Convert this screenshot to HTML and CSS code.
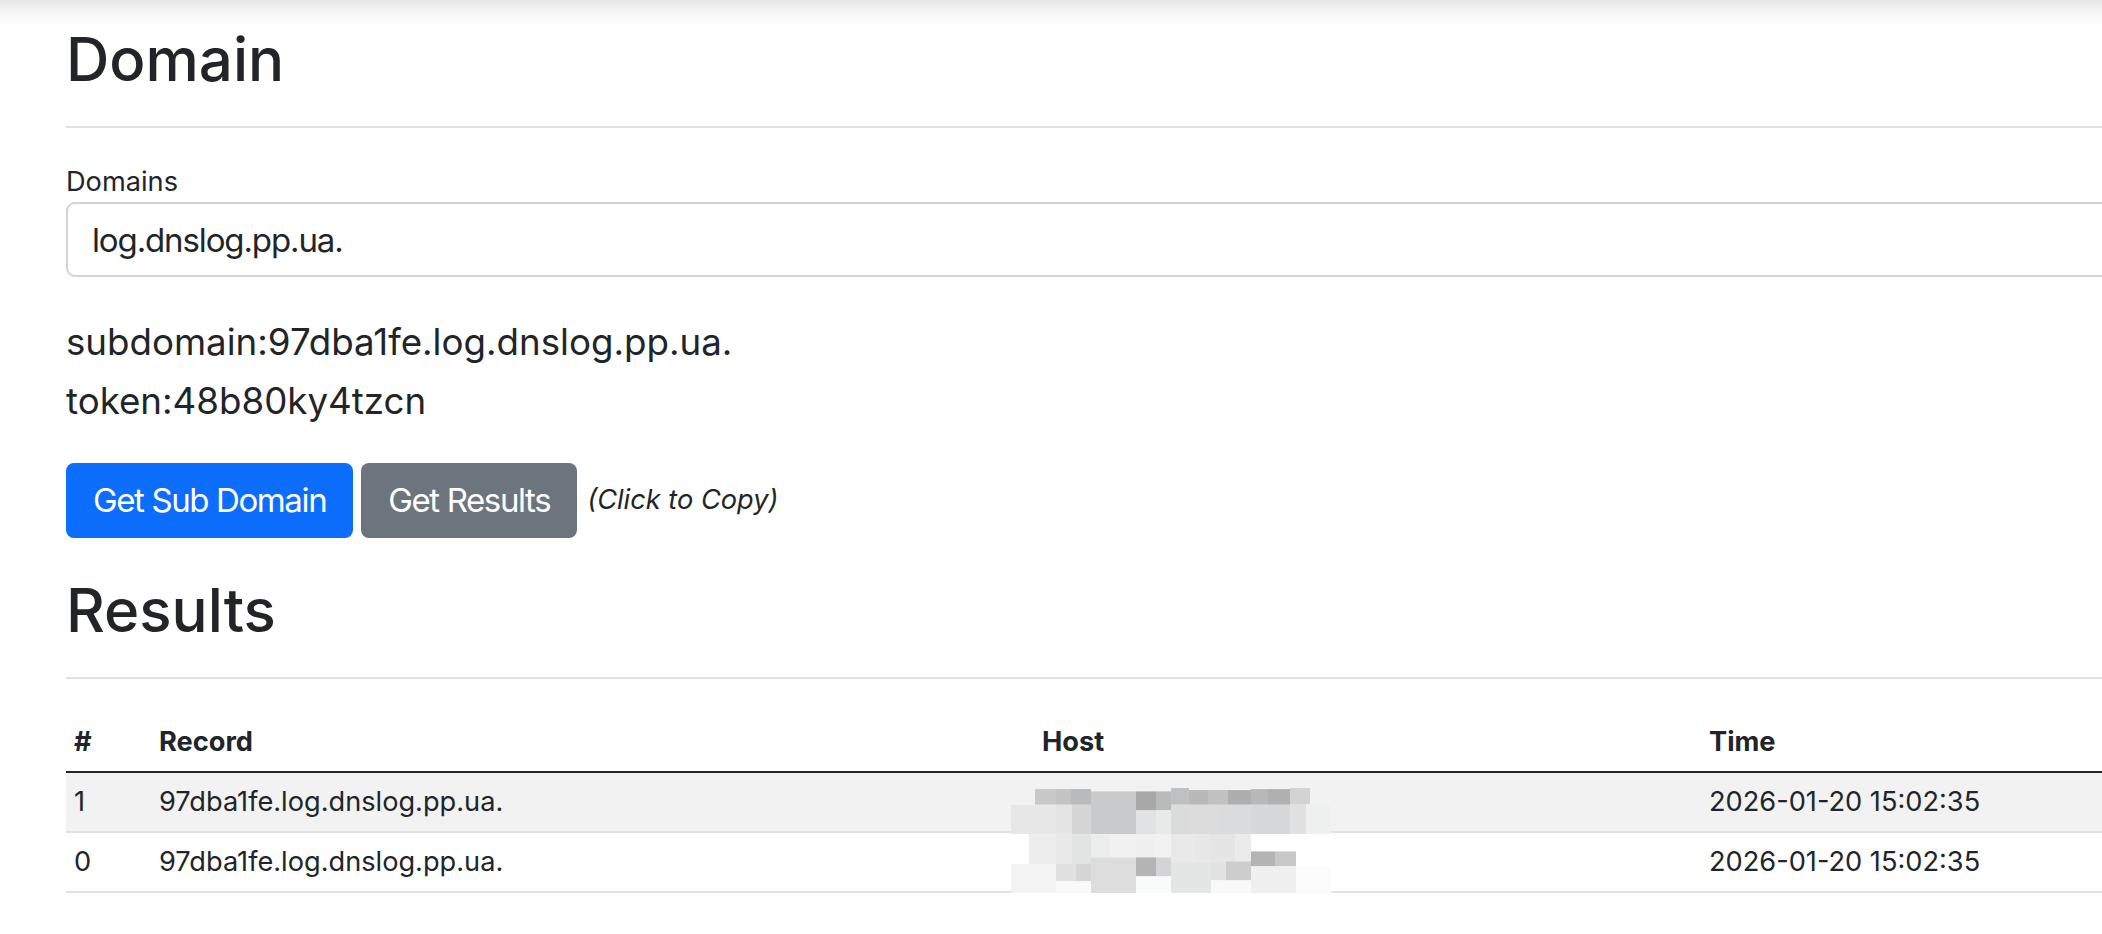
FILE: index.html
```html
<!DOCTYPE html>
<html lang="en">
<head>
<meta charset="utf-8">
<title>DNSLog</title>
<link rel="stylesheet" href="styles.css">
</head>
<body>
<main class="page">
  <h1 class="title">Domain</h1>
  <hr class="rule">
  <label class="field-label" for="domains">Domains</label>
  <input class="field" id="domains" type="text" value="log.dnslog.pp.ua.">
  <div class="info">
    <p class="info-line">subdomain:97dba1fe.log.dnslog.pp.ua.</p>
    <p class="info-line">token:48b80ky4tzcn</p>
  </div>
  <div class="actions">
    <button class="btn btn-primary" type="button">Get Sub Domain</button>
    <button class="btn btn-secondary" type="button">Get Results</button>
    <span class="copy-hint">(Click to Copy)</span>
  </div>
  <h2 class="section-title">Results</h2>
  <hr class="rule rule-results">
  <table class="results">
    <thead>
      <tr>
        <th class="col-idx">#</th>
        <th class="col-record">Record</th>
        <th class="col-host">Host</th>
        <th class="col-time">Time</th>
      </tr>
    </thead>
    <tbody>
      <tr class="striped">
        <td>1</td>
        <td>97dba1fe.log.dnslog.pp.ua.</td>
        <td class="host-cell">
          <svg class="mosaic" width="1" height="1" overflow="visible" aria-hidden="true">
            <g transform="translate(-42 -100.6) scale(0.33333)">
              <rect x="105" y="323" width="63" height="47" fill="#c8c8c8"/>
              <rect x="168" y="323" width="45" height="47" fill="#c3c3c4"/>
              <rect x="213" y="323" width="60" height="47" fill="#b9babb"/>
              <rect x="273" y="330" width="135" height="128" fill="#c9cacb"/>
              <rect x="408" y="330" width="60" height="57" fill="#a8a8a9"/>
              <rect x="468" y="330" width="45" height="57" fill="#b9babb"/>
              <rect x="513" y="320" width="54" height="50" fill="#bfc0c1"/>
              <rect x="567" y="326" width="57" height="44" fill="#b8b8b9"/>
              <rect x="624" y="326" width="60" height="44" fill="#c1c1c2"/>
              <rect x="684" y="326" width="69" height="44" fill="#aeaeaf"/>
              <rect x="753" y="323" width="51" height="47" fill="#b8b8b9"/>
              <rect x="804" y="323" width="66" height="47" fill="#b0b0b1"/>
              <rect x="870" y="320" width="60" height="48" fill="#d3d3d3"/>
              <rect x="33" y="370" width="135" height="88" fill="#e6e7e6"/>
              <rect x="168" y="370" width="48" height="88" fill="#e3e4e3"/>
              <rect x="216" y="370" width="57" height="88" fill="#d6d6d7"/>
              <rect x="408" y="387" width="60" height="71" fill="#e1e2e3"/>
              <rect x="468" y="387" width="45" height="71" fill="#e8eae9"/>
              <rect x="513" y="370" width="54" height="88" fill="#dadbdb"/>
              <rect x="567" y="370" width="90" height="88" fill="#dcdcdd"/>
              <rect x="657" y="370" width="96" height="88" fill="#d9dbdc"/>
              <rect x="753" y="370" width="117" height="88" fill="#d6d7d9"/>
              <rect x="870" y="368" width="48" height="90" fill="#e1e1e2"/>
              <rect x="918" y="370" width="75" height="88" fill="#eff0f0"/>
              <rect x="87" y="458" width="81" height="90" fill="#ecedec"/>
              <rect x="168" y="458" width="48" height="90" fill="#e9e9e9"/>
              <rect x="216" y="458" width="57" height="90" fill="#e2e3e3"/>
              <rect x="273" y="458" width="57" height="70" fill="#eceded"/>
              <rect x="330" y="458" width="78" height="70" fill="#f1f1f1"/>
              <rect x="408" y="458" width="57" height="70" fill="#f0f0f0"/>
              <rect x="465" y="458" width="48" height="70" fill="#f2f2f2"/>
              <rect x="513" y="458" width="72" height="82" fill="#e9e9e9"/>
              <rect x="585" y="458" width="45" height="82" fill="#e7e7e7"/>
              <rect x="630" y="458" width="75" height="82" fill="#e5e5e5"/>
              <rect x="705" y="458" width="48" height="82" fill="#ebebeb"/>
              <rect x="753" y="510" width="72" height="45" fill="#b4b4b5"/>
              <rect x="825" y="510" width="63" height="45" fill="#c8c8c9"/>
              <rect x="33" y="548" width="135" height="97" fill="#f2f3f2"/>
              <rect x="168" y="548" width="60" height="52" fill="#e0e1e0"/>
              <rect x="228" y="548" width="45" height="52" fill="#d6d6d6"/>
              <rect x="168" y="600" width="105" height="45" fill="#f8f9f8"/>
              <rect x="273" y="528" width="135" height="117" fill="#dcdddc"/>
              <rect x="408" y="528" width="60" height="57" fill="#b4b4b5"/>
              <rect x="468" y="528" width="45" height="57" fill="#d4d4d6"/>
              <rect x="408" y="585" width="105" height="60" fill="#f9fafa"/>
              <rect x="513" y="540" width="120" height="105" fill="#e4e5e5"/>
              <rect x="633" y="540" width="45" height="57" fill="#e2e2e2"/>
              <rect x="678" y="540" width="75" height="57" fill="#cdcdcd"/>
              <rect x="633" y="597" width="120" height="48" fill="#f8f9f8"/>
              <rect x="753" y="555" width="135" height="90" fill="#eff0ef"/>
              <rect x="888" y="555" width="105" height="90" fill="#fbfcfb"/>
            </g>
          </svg>
        </td>
        <td>2026-01-20 15:02:35</td>
      </tr>
      <tr>
        <td>0</td>
        <td>97dba1fe.log.dnslog.pp.ua.</td>
        <td class="host-cell"></td>
        <td>2026-01-20 15:02:35</td>
      </tr>
    </tbody>
  </table>
</main>
</body>
</html>
```
FILE: styles.css
```css
html, body {
  margin: 0;
  padding: 0;
}

body {
  overflow: hidden;
  background: #fff linear-gradient(to bottom, #e6e6e6 0px, #f4f4f4 10px, #fdfdfd 22px, #ffffff 28px) no-repeat;
  background-size: 100% 30px;
  color: #212529;
  font-family: Inter, "Liberation Sans", Arial, sans-serif;
  font-size: 27.2px;
  line-height: 1.5;
}

.page {
  width: 2100px;
  margin-left: 66px;
  padding-top: 23px;
}

.title {
  margin: 0;
  font-size: 60px;
  font-weight: 500;
  line-height: 72px;
}

.rule {
  margin: 31px 0 0;
  height: 0;
  border: 0;
  border-top: 2px solid #dee2e6;
}

.field-label {
  display: block;
  margin-top: 33.5px;
  font-size: 27.2px;
  line-height: 40.8px;
}

.field {
  display: block;
  box-sizing: border-box;
  width: 100%;
  height: 75px;
  margin: 0;
  padding: 0 24px;
  border: 2px solid #ced4da;
  border-radius: 9px;
  background: #fff;
  color: #212529;
  font-family: Inter, "Liberation Sans", Arial, sans-serif;
  font-size: 33px;
  letter-spacing: -0.034em;
  outline: none;
}

.info {
  margin-top: 34.3px;
}

.info-line {
  margin: 0;
  font-size: 36.7px;
  font-weight: 400;
  line-height: 59px;
}

.actions {
  display: flex;
  align-items: center;
  gap: 8px;
  margin-top: 33px;
}

.btn {
  height: 75px;
  padding: 0 27px;
  border: 0;
  border-radius: 8px;
  color: #fff;
  font-family: Inter, "Liberation Sans", Arial, sans-serif;
  font-size: 33px;
  font-weight: 400;
  letter-spacing: -0.042em;
  line-height: 1;
  cursor: pointer;
}

.btn-primary {
  background: #0d6efd;
}

.btn-secondary {
  background: #6c757d;
}

.copy-hint {
  margin-left: 2px;
  font-size: 27.2px;
  font-style: italic;
}

.section-title {
  margin: 36px 0 0;
  font-size: 60px;
  font-weight: 500;
  line-height: 72px;
}

.rule-results {
  margin-top: 31.5px;
}

.results {
  width: 2100px;
  margin-top: 34px;
  border-collapse: collapse;
  table-layout: fixed;
}

.results th,
.results td {
  padding: 8.6px 8px;
  text-align: left;
  vertical-align: top;
  line-height: 40.8px;
  font-size: 27.2px;
}

.results th {
  font-weight: 700;
}

.results thead tr {
  border-bottom: 2px solid #212529;
}

.results tbody tr {
  border-bottom: 2px solid #dee2e6;
}

.results tbody tr.striped td {
  background: #f2f2f2;
}

.col-idx { width: 69px; }
.col-record { width: 867px; }
.col-host { width: 651px; }
.col-time { width: 449px; }

.mosaic {
  display: block;
  overflow: visible;
}
```
